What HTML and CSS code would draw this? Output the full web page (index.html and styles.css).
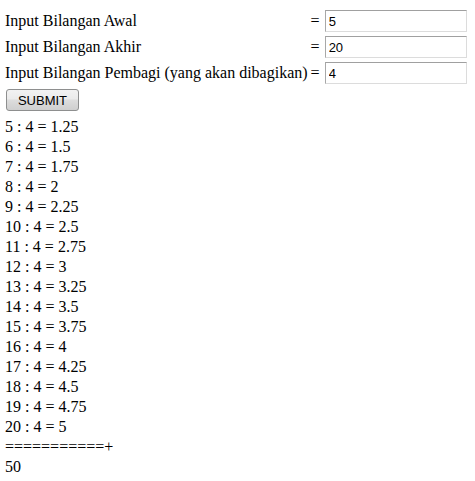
FILE: index.html
```html
<!DOCTYPE html>
<html>
<head>
<meta charset="utf-8">
<link rel="stylesheet" href="styles.css">
</head>
<body>
<form class="form">
  <div class="grid">
    <span class="label">Input Bilangan Awal</span><span class="eq">=</span><input class="field" type="text" value="5">
    <span class="label">Input Bilangan Akhir</span><span class="eq">=</span><input class="field" type="text" value="20">
    <span class="label">Input Bilangan Pembagi (yang akan dibagikan)</span><span class="eq">=</span><input class="field" type="text" value="4">
  </div>
  <button class="submit" type="button">SUBMIT</button>
</form>
<div class="output">
  <div>5 : 4 = 1.25</div>
  <div>6 : 4 = 1.5</div>
  <div>7 : 4 = 1.75</div>
  <div>8 : 4 = 2</div>
  <div>9 : 4 = 2.25</div>
  <div>10 : 4 = 2.5</div>
  <div>11 : 4 = 2.75</div>
  <div>12 : 4 = 3</div>
  <div>13 : 4 = 3.25</div>
  <div>14 : 4 = 3.5</div>
  <div>15 : 4 = 3.75</div>
  <div>16 : 4 = 4</div>
  <div>17 : 4 = 4.25</div>
  <div>18 : 4 = 4.5</div>
  <div>19 : 4 = 4.75</div>
  <div>20 : 4 = 5</div>
  <div>===========+</div>
  <div>50</div>
</div>
</body>
</html>
```

FILE: styles.css
```css
html, body {
  margin: 0;
  padding: 0;
  background: #fff;
}
body {
  font-family: "Liberation Serif", "Times New Roman", serif;
  font-size: 16px;
  color: #000;
  padding: 10px 0 0 5px;
}
.form {
  margin: 0;
}
.grid {
  display: grid;
  grid-template-columns: auto auto 142px;
  justify-content: start;
  grid-auto-rows: 22px;
  row-gap: 4px;
  align-items: center;
}
.label {
  white-space: nowrap;
}
.eq {
  text-align: right;
  padding-left: 3px;
  padding-right: 5px;
}
.field {
  box-sizing: border-box;
  width: 142px;
  height: 22px;
  margin: 0;
  padding: 1px 3px 0;
  font-family: "Liberation Sans", Arial, sans-serif;
  font-size: 13px;
  color: #000;
  background: #fff;
  border: 1px solid;
  border-color: #a0a0a0 #dcdcdc #dcdcdc #a8a8a8;
  outline: none;
}
.submit {
  display: block;
  box-sizing: border-box;
  width: 73px;
  height: 22px;
  margin: 5px 0 0 1px;
  padding: 0;
  font-family: "Liberation Sans", Arial, sans-serif;
  font-size: 13px;
  color: #000;
  border: 1px solid #8e8f8f;
  border-radius: 3px;
  background: linear-gradient(#f2f2f2 0%, #ebebeb 45%, #dddddd 50%, #cfcfcf 100%);
}
.output {
  margin-top: 6px;
  line-height: 20px;
}
```
